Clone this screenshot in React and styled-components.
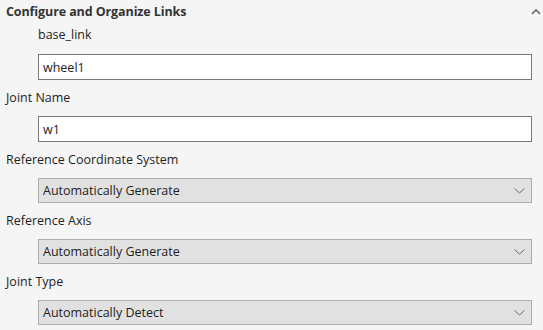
import React from 'react'
import styled, { createGlobalStyle } from 'styled-components'

const GlobalStyle = createGlobalStyle`
    html, body {
        margin: 0;
        padding: 0;
        background: #f5f5f5;
    }
    body {
        font-family: "Open Sans", "Noto Sans", sans-serif;
        color: #1e1e1e;
    }
`;

const Panel = styled.div`
    width: 543px;
    height: 330px;
    overflow: hidden;
    background-color: #f5f5f5;
    padding: 0 0 0 6px;
    box-sizing: border-box;
`;

const Header = styled.div`
    display: flex;
    align-items: center;
    justify-content: space-between;
    height: 22px;
    padding-right: 2px;
`;

const Title = styled.span`
    font-size: 12.5px;
    font-weight: 700;
    color: #333;
    letter-spacing: -0.1px;
`;

const Field = styled.div`
    display: flex;
    flex-direction: column;
    padding-bottom: 7px;
`;

const Label = styled.div`
    font-size: 12.5px;
    line-height: 22px;
    height: 22px;
    margin-left: ${(props) => (props.indent ? "32px" : "0")};
    margin-top: ${(props) => (props.top ? props.top : "0")};
    margin-bottom: ${(props) => (props.gap ? props.gap : "7px")};
`;

const TextBox = styled.div`
    margin-left: 32px;
    width: 494px;
    height: 26px;
    box-sizing: border-box;
    border: 1px solid #7a7a7a;
    background: #fff;
    display: flex;
    align-items: center;
    padding-left: 4px;
    font-size: 12.5px;
`;

const Select = styled.div`
    margin-left: 32px;
    width: 494px;
    height: 25px;
    box-sizing: border-box;
    border: 1px solid #adadad;
    background: #e1e1e1;
    display: flex;
    align-items: center;
    justify-content: space-between;
    padding: 0 6px 0 4px;
    font-size: 12.5px;
`;

const Chevron = ({ up }) => (
    <svg width={up ? 10 : 11} height={up ? 7 : 6} viewBox={up ? "0 0 10 7" : "0 0 11 6"}>
        {up
            ? <path d="M1 6 L5 2 L9 6" fill="none" stroke="#6a6a6a" strokeWidth="1.6" />
            : <path d="M0.5 0.5 L5.5 5 L10.5 0.5" fill="none" stroke="#6a6a6a" strokeWidth="1" />}
    </svg>
)

const App = () => {
    const selects = [
        { label: "Reference Coordinate System", value: "Automatically Generate" },
        { label: "Reference Axis", value: "Automatically Generate" },
        { label: "Joint Type", value: "Automatically Detect" },
    ]

    return (
        <Panel>
            <GlobalStyle />
            <Header>
                <Title>Configure and Organize Links</Title>
                <Chevron up />
            </Header>
            <Field>
                <Label indent top="2px" gap="8px">base_link</Label>
                <TextBox>wheel1</TextBox>
            </Field>
            <Field>
                <Label>Joint Name</Label>
                <TextBox>w1</TextBox>
            </Field>
            {selects.map((s, i) => (
                <Field key={i}>
                    <Label>{s.label}</Label>
                    <Select>
                        {s.value}
                        <Chevron />
                    </Select>
                </Field>
            ))}
        </Panel>
    )
}

export default App
